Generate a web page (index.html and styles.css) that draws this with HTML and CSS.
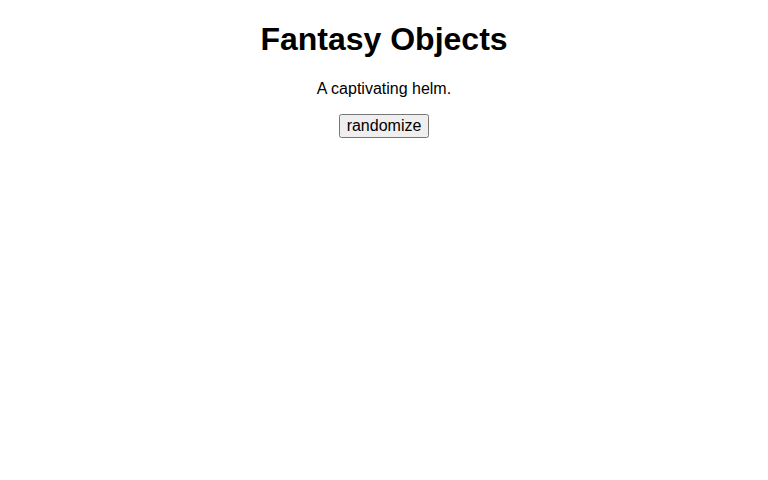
FILE: index.html
```html
<!DOCTYPE html>
<html lang="en">
<head>
<meta charset="UTF-8">
<meta name="viewport" content="width=device-width, initial-scale=1.0">
<title>Fantasy Objects</title>
<link rel="stylesheet" href="styles.css">
</head>
<body>
    <h1>Fantasy Objects</h1>
    <p id="description">A captivating helm.</p>
    <button id="randomize" onclick="randomize()">randomize</button>

    <script>
        const adjectives = ['captivating', 'gleaming', 'cursed', 'ancient', 'whispering'];
        const objects = ['helm', 'sword', 'amulet', 'shield', 'ring'];

        function pick(list) {
            return list[Math.floor(Math.random() * list.length)];
        }

        function randomize() {
            document.getElementById('description').textContent =
                'A ' + pick(adjectives) + ' ' + pick(objects) + '.';
        }
    </script>
</body>
</html>
```

FILE: styles.css
```css
body {
    font-family: "Liberation Sans", Arial, sans-serif;
    margin: 0;
    text-align: center;
    color: #000;
    background-color: #fff;
}
h1 {
    font-size: 32px;
}
button {
    font-family: inherit;
    font-size: 16px;
}
```
